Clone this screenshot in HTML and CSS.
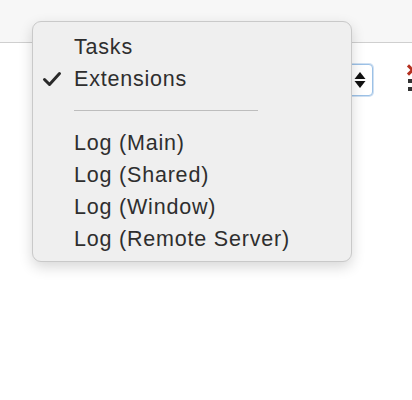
FILE: index.html
```html
<!DOCTYPE html>
<html lang="en">
<head>
    <meta charset="UTF-8">
    <title>Output</title>
    <link rel="stylesheet" href="styles.css">
</head>
<body>
    <div class="toolbar"></div>
    <div class="panel">
        <div class="select-box">
            <svg width="14" height="22" viewBox="0 0 14 22">
                <path d="M7 3 L12.5 10 L1.5 10 Z" fill="#111"/>
                <path d="M7 19 L12.5 12 L1.5 12 Z" fill="#111"/>
            </svg>
        </div>
        <div class="actions">
            <span class="close-x"></span>
            <span class="dot"></span>
            <span class="dot"></span>
        </div>
    </div>

    <!-- dropdown menu -->
    <div class="menu">
        <div class="item">Tasks</div>
        <div class="item checked">
            <svg class="check" width="20" height="16" viewBox="0 0 20 16">
                <path d="M2.5 8.5 L7.5 13.5 L17.5 2.5" fill="none" stroke="#2a2a2a" stroke-width="3" stroke-linecap="round" stroke-linejoin="round"/>
            </svg>
            Extensions
        </div>
        <div class="separator"></div>
        <div class="item">Log (Main)</div>
        <div class="item">Log (Shared)</div>
        <div class="item">Log (Window)</div>
        <div class="item">Log (Remote Server)</div>
    </div>
</body>
</html>
```

FILE: styles.css
```css
body {
    margin: 0;
    height: 400px;
    background: #ffffff;
    font-family: 'Liberation Sans', Arial, sans-serif;
    overflow: hidden;
}
.toolbar {
    height: 42px;
    background: #f7f7f7;
    border-bottom: 1px solid #cfcfcf;
}
.panel {
    display: flex;
    justify-content: flex-end;
    align-items: flex-start;
    gap: 32px;
    padding-top: 21px;
    margin-right: -4px;
}
.select-box {
    width: 40px;
    height: 32px;
    border: 1px solid #9cc1e6;
    border-radius: 4px;
    background: #fff;
    box-shadow: 0 0 0 1px #cfe0f2;
    display: flex;
    justify-content: flex-end;
    align-items: center;
    padding-right: 5px;
    box-sizing: border-box;
}
.actions {
    width: 11px;
    display: flex;
    flex-direction: column;
    gap: 4px;
    padding-top: 2px;
}
.close-x {
    width: 5px;
    height: 5px;
    border-right: 3px solid #b5301f;
    border-bottom: 3px solid #b5301f;
    transform: rotate(-45deg);
    margin-bottom: 1px;
}
.dot {
    width: 4px;
    height: 4px;
    background: #333;
    margin-left: 3px;
}
.menu {
    position: absolute;
    left: 32px;
    top: 21px;
    width: 320px;
    height: 241px;
    box-sizing: border-box;
    padding: 9px 0 8px;
    background: #efefef;
    border: 1px solid #c9c9c9;
    border-radius: 9px;
    box-shadow: 0 5px 14px rgba(0, 0, 0, 0.16);
}
.item {
    position: relative;
    height: 32px;
    line-height: 32px;
    padding-left: 41px;
    font-size: 21.5px;
    letter-spacing: 0.8px;
    color: #2e2e2e;
}
.check {
    position: absolute;
    left: 9px;
    top: 8px;
}
.separator {
    height: 32px;
    margin-left: 41px;
    width: 184px;
    position: relative;
}
.separator::after {
    content: "";
    position: absolute;
    left: 0;
    right: 0;
    top: 15px;
    height: 1px;
    background: #bdbdbd;
}
```
